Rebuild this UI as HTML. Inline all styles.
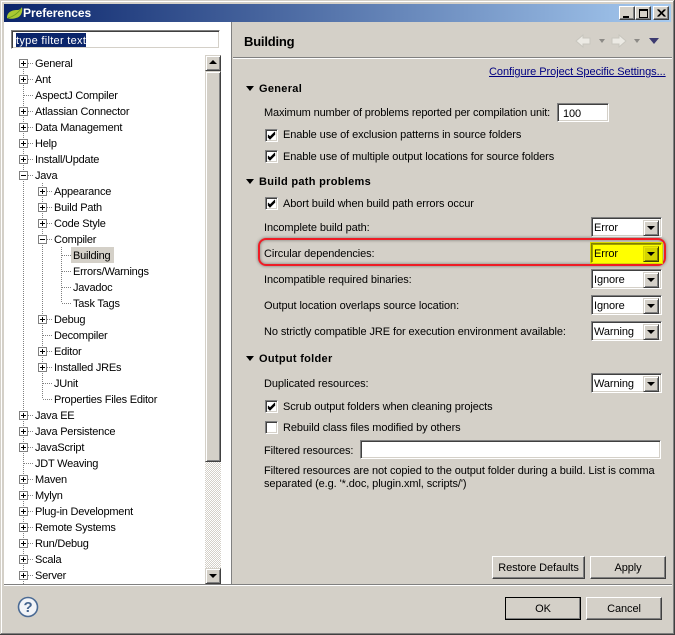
<!DOCTYPE html>
<html><head><meta charset="utf-8"><style>
html,body{margin:0;padding:0;width:675px;height:635px;overflow:hidden;background:#d4d0c8}
body{position:relative;font:11px/14px "Liberation Sans",sans-serif;color:#000;letter-spacing:-.09px}
div,span.a{position:absolute}
.t{position:absolute;white-space:nowrap;line-height:14px;height:14px;margin-top:1px}
.b{font-weight:bold;letter-spacing:.3px}
.pl,.mn{position:absolute;width:7px;height:7px;border:1px solid #808080;background:#fff}
.pl:before,.mn:before{content:"";position:absolute;left:1px;top:3px;width:5px;height:1px;background:#000}
.pl:after{content:"";position:absolute;left:3px;top:1px;width:1px;height:5px;background:#000}
.dh{position:absolute;height:1px;background:repeating-linear-gradient(90deg,#808080 0 1px,transparent 1px 2px)}
.dv{position:absolute;width:1px;background:repeating-linear-gradient(180deg,#808080 0 1px,transparent 1px 2px)}
.btn{position:absolute;background:#d4d0c8;box-sizing:border-box;border:1px solid;border-color:#fff #404040 #404040 #fff;box-shadow:inset -1px -1px 0 #808080;text-align:center}
.sb{position:absolute;box-sizing:border-box;width:16px;height:16px;background:#d4d0c8;border:1px solid;border-color:#d4d0c8 #404040 #404040 #d4d0c8;box-shadow:inset 1px 1px 0 #fff,inset -1px -1px 0 #808080}
.up{position:absolute;left:3px;top:4px;width:0;height:0;border:4px solid transparent;border-top:0;border-bottom:4px solid #000}
.dn{position:absolute;left:3px;top:5px;width:0;height:0;border:4px solid transparent;border-bottom:0;border-top:4px solid #000}
.cb{position:absolute;box-sizing:border-box;width:71px;height:20px;background:#fff;border:1px solid;border-color:#808080 #fff #fff #808080;box-shadow:inset 1px 1px 0 #404040,inset -1px -1px 0 #d4d0c8}
.cb span{position:absolute;left:2px;top:3px;line-height:14px}
.cb i{position:absolute;right:2px;top:2px;width:16px;height:16px;box-sizing:border-box;background:#d4d0c8;border:1px solid;border-color:#d4d0c8 #404040 #404040 #d4d0c8;box-shadow:inset 1px 1px 0 #fff,inset -1px -1px 0 #808080}
.cb i:after{content:"";position:absolute;left:3px;top:5px;border:4px solid transparent;border-bottom:0;border-top:4px solid #000}
.chk{position:absolute;box-sizing:border-box;width:13px;height:13px;background:#fff;border:1px solid;border-color:#808080 #fff #fff #808080;box-shadow:inset 1px 1px 0 #404040,inset -1px -1px 0 #d4d0c8}
.fld{position:absolute;box-sizing:border-box;background:#fff;border:1px solid;border-color:#808080 #fff #fff #808080;box-shadow:inset 1px 1px 0 #404040,inset -1px -1px 0 #d4d0c8}
.tri{position:absolute;width:0;height:0;border:4.5px solid transparent;border-bottom:0;border-top:5px solid #000}
</style></head><body>
<!-- window frame -->
<div style="left:0;top:0;width:675px;height:1px;background:#d4d0c8"></div>
<div style="left:1px;top:1px;width:673px;height:1px;background:#fff"></div>
<div style="left:1px;top:1px;width:1px;height:633px;background:#fff"></div>
<div style="left:674px;top:0;width:1px;height:635px;background:#404040"></div>
<div style="left:673px;top:1px;width:1px;height:633px;background:#808080"></div>
<div style="left:0;top:634px;width:675px;height:1px;background:#404040"></div>
<div style="left:1px;top:633px;width:673px;height:1px;background:#808080"></div>
<!-- title -->
<div style="left:4px;top:4px;width:667px;height:18px;background:linear-gradient(90deg,#0a246a,#a6caf0)"></div>
<svg style="position:absolute;left:6px;top:6px" width="17" height="15" viewBox="0 0 17 15"><path d="M1 12C1 6 6 4 11 4C13 4 15 3 16 1C17 6 15 11 10 12C7 13 3 13 1 12Z" fill="#a9c832"/><path d="M2 12C6 11 11 8 15 3" stroke="#6d9a1e" fill="none"/></svg>
<div class="t" style="left:23px;top:5px;color:#fff;font-weight:bold;font-size:12px;letter-spacing:-.05px">Preferences</div>
<div class="btn" style="left:619px;top:6px;width:16px;height:14px"><div style="left:3px;top:9px;width:6px;height:2px;background:#000"></div></div>
<div class="btn" style="left:635px;top:6px;width:16px;height:14px"><div style="left:3px;top:2px;width:7px;height:6px;border:1px solid #000;border-top-width:2px"></div></div>
<div class="btn" style="left:653px;top:6px;width:16px;height:14px"><svg style="position:absolute;left:3px;top:2px" width="9" height="8"><path d="M0.5 0.5L7.5 7.5M1.5 0.5L8.5 7.5M7.5 0.5L0.5 7.5M8.5 0.5L1.5 7.5" stroke="#000"/></svg></div>
<!-- left panel -->
<div style="left:4px;top:22px;width:227px;height:562px;background:#fff"></div>
<div style="left:231px;top:22px;width:1px;height:562px;background:#808080"></div>
<div class="fld" style="left:11px;top:30px;width:209px;height:19px"></div>
<div style="left:16px;top:33px;width:70px;height:14px;background:#0a246a"></div>
<div class="t" style="left:16px;top:33px;color:#fff;letter-spacing:.3px">type filter text</div>
<!-- scrollbar -->
<div style="left:205px;top:55px;width:16px;height:529px;background:repeating-conic-gradient(#d4d0c8 0 25%,#fff 0 50%) 0 0/2px 2px"></div>
<div class="sb" style="left:205px;top:55px"><span class="up"></span></div>
<div class="sb" style="left:205px;top:71px;height:391px"></div>
<div class="sb" style="left:205px;top:568px"><span class="dn"></span></div>
<!-- tree lines -->
<div class="dv" style="left:23px;top:59px;height:525px"></div>
<div class="dv" style="left:42px;top:183px;height:216px"></div>
<div class="dv" style="left:61px;top:247px;height:56px"></div>
<div class="dh" style="left:28px;top:63px;width:6px"></div><div class="dh" style="left:28px;top:79px;width:6px"></div><div class="dh" style="left:24px;top:95px;width:10px"></div><div class="dh" style="left:28px;top:111px;width:6px"></div><div class="dh" style="left:28px;top:127px;width:6px"></div><div class="dh" style="left:28px;top:143px;width:6px"></div><div class="dh" style="left:28px;top:159px;width:6px"></div><div class="dh" style="left:28px;top:175px;width:6px"></div>
<div class="dh" style="left:47px;top:191px;width:6px"></div><div class="dh" style="left:47px;top:207px;width:6px"></div><div class="dh" style="left:47px;top:223px;width:6px"></div><div class="dh" style="left:47px;top:239px;width:6px"></div>
<div class="dh" style="left:62px;top:255px;width:9px"></div><div class="dh" style="left:62px;top:271px;width:9px"></div><div class="dh" style="left:62px;top:287px;width:9px"></div><div class="dh" style="left:62px;top:303px;width:9px"></div>
<div class="dh" style="left:47px;top:319px;width:6px"></div><div class="dh" style="left:43px;top:335px;width:10px"></div><div class="dh" style="left:47px;top:351px;width:6px"></div><div class="dh" style="left:47px;top:367px;width:6px"></div><div class="dh" style="left:43px;top:383px;width:10px"></div><div class="dh" style="left:43px;top:399px;width:10px"></div>
<div class="dh" style="left:28px;top:415px;width:6px"></div><div class="dh" style="left:28px;top:431px;width:6px"></div><div class="dh" style="left:28px;top:447px;width:6px"></div><div class="dh" style="left:24px;top:463px;width:10px"></div><div class="dh" style="left:28px;top:479px;width:6px"></div><div class="dh" style="left:28px;top:495px;width:6px"></div><div class="dh" style="left:28px;top:511px;width:6px"></div><div class="dh" style="left:28px;top:527px;width:6px"></div><div class="dh" style="left:28px;top:543px;width:6px"></div><div class="dh" style="left:28px;top:559px;width:6px"></div><div class="dh" style="left:28px;top:575px;width:6px"></div>
<!-- tree boxes -->
<span class="pl" style="left:19px;top:59px"></span><span class="pl" style="left:19px;top:75px"></span><span class="pl" style="left:19px;top:107px"></span><span class="pl" style="left:19px;top:123px"></span><span class="pl" style="left:19px;top:139px"></span><span class="pl" style="left:19px;top:155px"></span><span class="mn" style="left:19px;top:171px"></span>
<span class="pl" style="left:38px;top:187px"></span><span class="pl" style="left:38px;top:203px"></span><span class="pl" style="left:38px;top:219px"></span><span class="mn" style="left:38px;top:235px"></span><span class="pl" style="left:38px;top:315px"></span><span class="pl" style="left:38px;top:347px"></span><span class="pl" style="left:38px;top:363px"></span>
<span class="pl" style="left:19px;top:411px"></span><span class="pl" style="left:19px;top:427px"></span><span class="pl" style="left:19px;top:443px"></span><span class="pl" style="left:19px;top:475px"></span><span class="pl" style="left:19px;top:491px"></span><span class="pl" style="left:19px;top:507px"></span><span class="pl" style="left:19px;top:523px"></span><span class="pl" style="left:19px;top:539px"></span><span class="pl" style="left:19px;top:555px"></span><span class="pl" style="left:19px;top:571px"></span>
<!-- tree labels -->
<div style="left:0;top:0;width:0;height:0;letter-spacing:-.22px">
<div class="t" style="left:35px;top:56px">General</div>
<div class="t" style="left:35px;top:72px">Ant</div>
<div class="t" style="left:35px;top:88px">AspectJ Compiler</div>
<div class="t" style="left:35px;top:104px">Atlassian Connector</div>
<div class="t" style="left:35px;top:120px">Data Management</div>
<div class="t" style="left:35px;top:136px">Help</div>
<div class="t" style="left:35px;top:152px">Install/Update</div>
<div class="t" style="left:35px;top:168px">Java</div>
<div class="t" style="left:54px;top:184px">Appearance</div>
<div class="t" style="left:54px;top:200px">Build Path</div>
<div class="t" style="left:54px;top:216px">Code Style</div>
<div class="t" style="left:54px;top:232px">Compiler</div>
<div style="left:71px;top:247px;width:43px;height:16px;background:#d4d0c8"></div>
<div class="t" style="left:73px;top:248px">Building</div>
<div class="t" style="left:73px;top:264px">Errors/Warnings</div>
<div class="t" style="left:73px;top:280px">Javadoc</div>
<div class="t" style="left:73px;top:296px">Task Tags</div>
<div class="t" style="left:54px;top:312px">Debug</div>
<div class="t" style="left:54px;top:328px">Decompiler</div>
<div class="t" style="left:54px;top:344px">Editor</div>
<div class="t" style="left:54px;top:360px">Installed JREs</div>
<div class="t" style="left:54px;top:376px">JUnit</div>
<div class="t" style="left:54px;top:392px">Properties Files Editor</div>
<div class="t" style="left:35px;top:408px">Java EE</div>
<div class="t" style="left:35px;top:424px">Java Persistence</div>
<div class="t" style="left:35px;top:440px">JavaScript</div>
<div class="t" style="left:35px;top:456px">JDT Weaving</div>
<div class="t" style="left:35px;top:472px">Maven</div>
<div class="t" style="left:35px;top:488px">Mylyn</div>
<div class="t" style="left:35px;top:504px">Plug-in Development</div>
<div class="t" style="left:35px;top:520px">Remote Systems</div>
<div class="t" style="left:35px;top:536px">Run/Debug</div>
<div class="t" style="left:35px;top:552px">Scala</div>
<div class="t" style="left:35px;top:568px">Server</div>
</div>
<!-- right header -->
<div class="t b" style="left:244px;top:34px;font-size:13px;letter-spacing:-.2px">Building</div>
<svg style="position:absolute;left:574px;top:33px" width="90" height="16"><path d="M2 8L9 2V5H16V11H9V14Z" fill="#eceae4" stroke="#c8c6be"/><path d="M25 6H31L28 10Z" fill="#8c8a86"/><path d="M52 8L45 2V5H38V11H45V14Z" fill="#eceae4" stroke="#c8c6be"/><path d="M60 6H66L63 10Z" fill="#8c8a86"/><path d="M75 5H85L80 11Z" fill="#3c3a70"/></svg>
<div style="left:233px;top:57px;width:439px;height:1px;background:#808080"></div>
<div style="left:233px;top:58px;width:439px;height:1px;background:#fff"></div>
<div class="t" style="left:489px;top:64px;color:#000080;text-decoration:underline;letter-spacing:-.05px">Configure Project Specific Settings...</div>
<!-- General -->
<div class="tri" style="left:246px;top:86px"></div>
<div class="t b" style="left:259px;top:81px">General</div>
<div class="t" style="left:264px;top:105px;letter-spacing:-.14px">Maximum number of problems reported per compilation unit:</div>
<div class="fld" style="left:557px;top:103px;width:52px;height:19px"></div>
<div class="t" style="left:563px;top:106px">100</div>
<div class="chk" style="left:265px;top:129px"></div><svg style="position:absolute;left:267px;top:131px" width="9" height="9"><path d="M1 4L3 6L8 1M1 5L3 7L8 2M1 6L3 8L8 3" stroke="#000" fill="none"/></svg>
<div class="t" style="left:283px;top:127px">Enable use of exclusion patterns in source folders</div>
<div class="chk" style="left:265px;top:150px"></div><svg style="position:absolute;left:267px;top:152px" width="9" height="9"><path d="M1 4L3 6L8 1M1 5L3 7L8 2M1 6L3 8L8 3" stroke="#000" fill="none"/></svg>
<div class="t" style="left:283px;top:149px">Enable use of multiple output locations for source folders</div>
<!-- Build path -->
<div class="tri" style="left:246px;top:179px"></div>
<div class="t b" style="left:259px;top:174px">Build path problems</div>
<div class="chk" style="left:265px;top:197px"></div><svg style="position:absolute;left:267px;top:199px" width="9" height="9"><path d="M1 4L3 6L8 1M1 5L3 7L8 2M1 6L3 8L8 3" stroke="#000" fill="none"/></svg>
<div class="t" style="left:283px;top:196px">Abort build when build path errors occur</div>
<div class="t" style="left:264px;top:220px">Incomplete build path:</div>
<div class="cb" style="left:591px;top:217px"><span>Error</span><i></i></div>
<div style="left:258px;top:238px;width:404px;height:24px;border:2px solid #ee1c25;border-radius:8px;box-shadow:0 0 3px rgba(0,0,0,.45),inset 0 0 3px rgba(0,0,0,.45)"></div>
<div class="t" style="left:264px;top:246px">Circular dependencies:</div>
<div class="cb" style="left:591px;top:243px;background:#ffff00;border-color:#808000 #ffff00 #ffff00 #808000;box-shadow:0 0 0 1px #d8d800,inset 1px 1px 0 #a0a000"><span>Error</span><i style="background:#d4d400;border-color:#d4d400 #404000 #404000 #d4d400;box-shadow:inset 1px 1px 0 #e8e800,inset -1px -1px 0 #808000"></i></div>
<div class="t" style="left:264px;top:272px">Incompatible required binaries:</div>
<div class="cb" style="left:591px;top:269px"><span>Ignore</span><i></i></div>
<div class="t" style="left:264px;top:298px">Output location overlaps source location:</div>
<div class="cb" style="left:591px;top:295px"><span>Ignore</span><i></i></div>
<div class="t" style="left:264px;top:324px">No strictly compatible JRE for execution environment available:</div>
<div class="cb" style="left:591px;top:321px"><span>Warning</span><i></i></div>
<!-- Output -->
<div class="tri" style="left:246px;top:356px"></div>
<div class="t b" style="left:259px;top:351px">Output folder</div>
<div class="t" style="left:264px;top:376px">Duplicated resources:</div>
<div class="cb" style="left:591px;top:373px"><span>Warning</span><i></i></div>
<div class="chk" style="left:265px;top:400px"></div><svg style="position:absolute;left:267px;top:402px" width="9" height="9"><path d="M1 4L3 6L8 1M1 5L3 7L8 2M1 6L3 8L8 3" stroke="#000" fill="none"/></svg>
<div class="t" style="left:283px;top:399px">Scrub output folders when cleaning projects</div>
<div class="chk" style="left:265px;top:421px"></div>
<div class="t" style="left:283px;top:420px">Rebuild class files modified by others</div>
<div class="t" style="left:264px;top:443px">Filtered resources:</div>
<div class="fld" style="left:360px;top:440px;width:301px;height:19px"></div>
<div class="t" style="left:264px;top:463px">Filtered resources are not copied to the output folder during a build. List is comma</div>
<div class="t" style="left:264px;top:476px">separated (e.g. '*.doc, plugin.xml, scripts/')</div>
<!-- buttons -->
<div class="btn" style="left:492px;top:556px;width:93px;height:23px;line-height:22px">Restore Defaults</div>
<div class="btn" style="left:590px;top:556px;width:76px;height:23px;line-height:22px">Apply</div>
<div style="left:4px;top:584px;width:668px;height:1px;background:#808080"></div>
<div style="left:4px;top:585px;width:668px;height:1px;background:#fff"></div>
<svg style="position:absolute;left:17px;top:596px" width="22" height="22"><circle cx="11" cy="11" r="9.5" fill="#f2f4f8" stroke="#4a6a94" stroke-width="1.6"/><text x="11" y="16" font-family="Liberation Sans" font-size="15" font-weight="bold" text-anchor="middle" fill="#44648e">?</text></svg>
<div class="btn" style="left:505px;top:597px;width:76px;height:23px;line-height:22px;outline:1px solid #000;outline-offset:-1px">OK</div>
<div class="btn" style="left:586px;top:597px;width:76px;height:23px;line-height:22px">Cancel</div>
</body></html>
